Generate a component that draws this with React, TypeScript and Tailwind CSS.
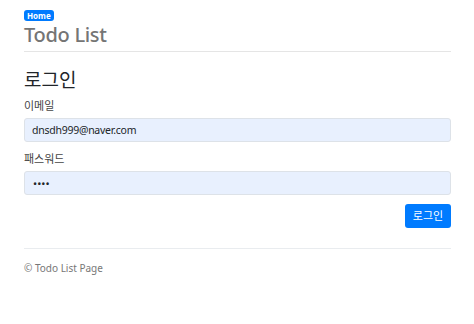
import React from 'react';

const font = { fontFamily: '"Noto Sans", "Noto Sans CJK KR", sans-serif' };

export default function App() {
  return (
    <div className="min-h-[324px] bg-white text-[#212529]" style={font}>
      <div className="ml-[24px] mr-[23px] pt-[10px]">
        <header className="border-b border-[#e5e5e5] pb-[3px]">
          <span className="block w-fit rounded-[3px] bg-[#007bff] px-[3px] text-[8px] font-bold leading-[11px] text-white">
            Home
          </span>
          <h1 className="mt-[1px] text-[20px] font-medium leading-[26px] tracking-[-0.3px] text-[#757575]">Todo List</h1>
        </header>

        <main className="pt-[15px]">
          <h2 className="text-[19px] leading-[26px] font-normal">로그인</h2>
          <form className="mt-[6px]">
            <label className="block text-[11px] leading-[14px] text-[#444]">이메일</label>
            <input
              className="mt-[5px] block h-[24px] w-full rounded-[3px] border border-[#dde2e8] bg-[#e8f0fe] px-[7px] text-[10.5px] tracking-[-0.25px] text-[#212529] outline-none"
              defaultValue="dnsdh999@naver.com"
            />
            <label className="mt-[10px] block text-[11px] leading-[14px] text-[#444]">패스워드</label>
            <input
              type="password"
              className="mt-[5px] block h-[24px] w-full rounded-[3px] border border-[#dde2e8] bg-[#e8f0fe] px-[8px] text-[11px] text-[#212529] outline-none"
              defaultValue="abcd"
            />
            <div className="mt-[9px] flex justify-end">
              <button
                type="button"
                className="h-[24px] w-[46px] rounded-[3px] bg-[#007bff] text-[11px] text-white"
              >
                로그인
              </button>
            </div>
          </form>
        </main>

        <footer className="mt-[20px] border-t border-[#e9ecef] pt-[12px]">
          <p className="text-[10px] leading-[15px] text-[#777]">© Todo List Page</p>
        </footer>
      </div>
    </div>
  );
}
